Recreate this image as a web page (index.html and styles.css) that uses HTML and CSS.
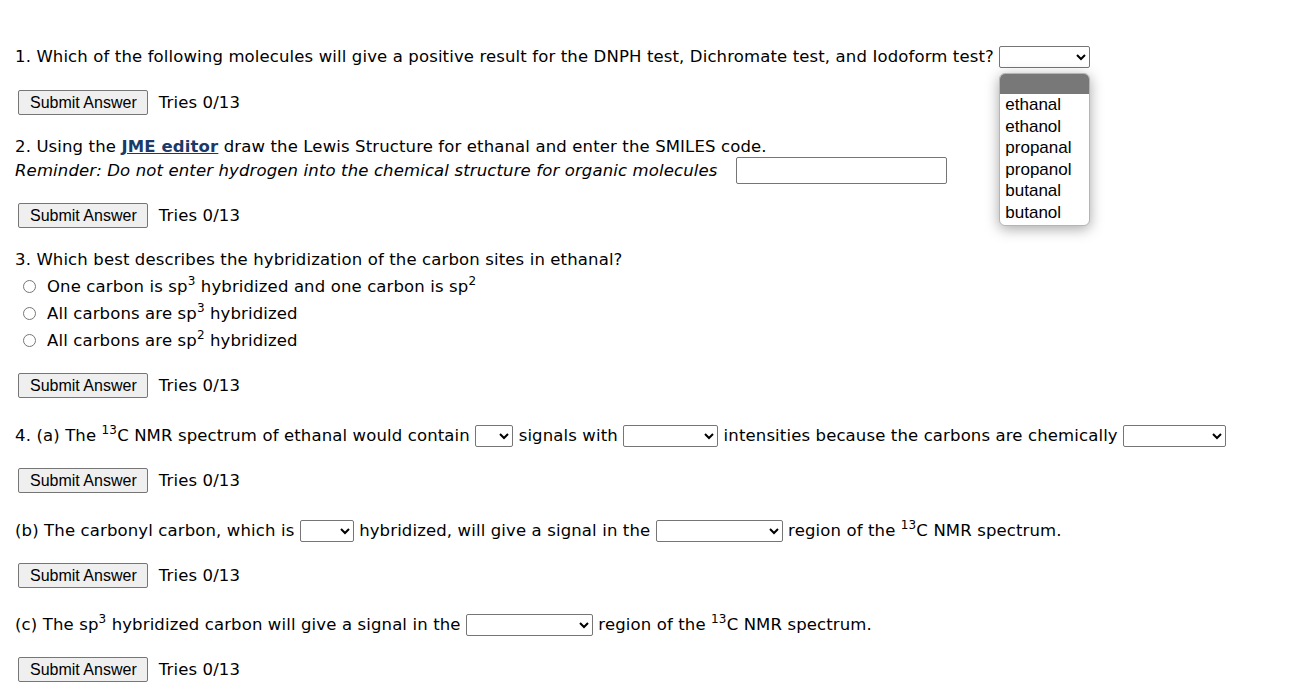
FILE: index.html
```html
<!DOCTYPE html>
<html lang="en">
<head>
    <meta charset="UTF-8">
    <meta name="viewport" content="width=device-width, initial-scale=1.0">
    <title>Ethanal - Problem Set</title>
    <link rel="stylesheet" href="styles.css">
</head>
<body>
<div class="page">

    <!-- Question 1 -->
    <div class="prompt">1. Which of the following molecules will give a positive result for the DNPH test, Dichromate test, and Iodoform test?
        <span class="pick">
            <select class="answer answer-q1"><option></option><option>ethanal</option><option>ethanol</option><option>propanal</option><option>propanol</option><option>butanal</option><option>butanol</option></select>
            <!-- opened list of the select above -->
            <ul class="dropdown">
                <li class="dropdown-blank"></li>
                <li>ethanal</li>
                <li>ethanol</li>
                <li>propanal</li>
                <li>propanol</li>
                <li>butanal</li>
                <li>butanol</li>
            </ul>
        </span>
    </div>
    <div class="submit-row gap-22">
        <button class="submit">Submit Answer</button>
        <span class="tries">Tries 0/13</span>
    </div>

    <!-- Question 2 -->
    <div class="prompt gap-21">2. Using the <a href="#" class="jme-link">JME editor</a> draw the Lewis Structure for ethanal and enter the SMILES code.</div>
    <div class="reminder-row">
        <em>Reminder: Do not enter hydrogen into the chemical structure for organic molecules</em>
        <input type="text" class="smiles-input">
    </div>
    <div class="submit-row gap-19">
        <button class="submit">Submit Answer</button>
        <span class="tries">Tries 0/13</span>
    </div>

    <!-- Question 3 -->
    <div class="prompt gap-21">3. Which best describes the hybridization of the carbon sites in ethanal?</div>
    <div class="choices">
        <label class="choice"><input type="radio" name="q3"><span>One carbon is sp<sup>3</sup> hybridized and one carbon is sp<sup>2</sup></span></label>
        <label class="choice"><input type="radio" name="q3"><span>All carbons are sp<sup>3</sup> hybridized</span></label>
        <label class="choice"><input type="radio" name="q3"><span>All carbons are sp<sup>2</sup> hybridized</span></label>
    </div>
    <div class="submit-row gap-19">
        <button class="submit">Submit Answer</button>
        <span class="tries">Tries 0/13</span>
    </div>

    <!-- Question 4 -->
    <div class="prompt gap-27">4. (a) The <sup>13</sup>C NMR spectrum of ethanal would contain <select class="answer answer-count"><option></option></select> signals with <select class="answer answer-intensity"><option></option></select> intensities because the carbons are chemically <select class="answer answer-equiv"><option></option></select></div>
    <div class="submit-row gap-21">
        <button class="submit">Submit Answer</button>
        <span class="tries">Tries 0/13</span>
    </div>

    <div class="prompt gap-27">(b) The carbonyl carbon, which is <select class="answer answer-hyb"><option></option></select> hybridized, will give a signal in the <select class="answer answer-region"><option></option></select> region of the <sup>13</sup>C NMR spectrum.</div>
    <div class="submit-row gap-21">
        <button class="submit">Submit Answer</button>
        <span class="tries">Tries 0/13</span>
    </div>

    <div class="prompt gap-26">(c) The sp<sup>3</sup> hybridized carbon will give a signal in the <select class="answer answer-region"><option></option></select> region of the <sup>13</sup>C NMR spectrum.</div>
    <div class="submit-row gap-21">
        <button class="submit">Submit Answer</button>
        <span class="tries">Tries 0/13</span>
    </div>

</div>
</body>
</html>
```

FILE: styles.css
```css
body {
    margin: 0;
    padding: 0;
    font-family: "DejaVu Sans", Verdana, sans-serif;
    font-size: 16.5px;
    letter-spacing: 0.13px;
    color: #000;
    background-color: #fff;
}

.page {
    padding: 46px 15px 0;
}

/* Question text */
.prompt {
    line-height: 22px;
    height: 22px;
    white-space: nowrap;
}

sup {
    font-size: 12px;
    line-height: 0;
    vertical-align: 7px;
}

.jme-link {
    color: #1b3a68;
    font-weight: bold;
}

/* Vertical spacing between blocks */
.gap-19 { margin-top: 19px; }
.gap-21 { margin-top: 21px; }
.gap-22 { margin-top: 22px; }
.gap-26 { margin-top: 26px; }
.gap-27 { margin-top: 27px; }

/* Select boxes */
.answer {
    height: 22px;
    margin: 0;
    padding: 0 2px;
    vertical-align: middle;
    font-family: "Liberation Sans", Arial, sans-serif;
    font-size: 13px;
    border: 1px solid #767676;
    border-radius: 2px;
    background-color: #fff;
    position: relative;
    top: -1px;
}

.answer-q1 { width: 91px; }
.answer-count { width: 38px; }
.answer-intensity { width: 95px; }
.answer-equiv { width: 103px; }
.answer-hyb { width: 54px; }
.answer-region { width: 127px; }

/* Opened list for question 1 */
.pick {
    position: relative;
    display: inline-block;
}

.dropdown {
    position: absolute;
    left: 0;
    top: 27px;
    width: 89px;
    margin: 0;
    padding: 0 0 2px;
    list-style: none;
    background-color: #fff;
    border: 1px solid #b5b5b5;
    border-radius: 6px;
    box-shadow: 0 3px 14px rgba(0, 0, 0, 0.35);
    font-family: "Liberation Sans", Arial, sans-serif;
    font-size: 17px;
    letter-spacing: 0;
    line-height: 21.5px;
    overflow: hidden;
    z-index: 5;
}

.dropdown li {
    padding-left: 5px;
    color: #000;
}

.dropdown .dropdown-blank {
    height: 20px;
    background-color: #787878;
}

/* Submit button + tries counter */
.submit-row {
    display: flex;
    align-items: center;
    height: 25px;
    padding-left: 3px;
}

.submit {
    height: 25px;
    padding: 0 10px 0 11px;
    font-family: "Liberation Sans", Arial, sans-serif;
    font-size: 16px;
    letter-spacing: 0;
    color: #000;
    background-color: #efefef;
    border: 1px solid #767676;
    border-radius: 2px;
    cursor: pointer;
}

.submit:hover {
    background-color: #e5e5e5;
}

.tries {
    margin-left: 11px;
}

/* Question 2 */
.reminder-row {
    display: flex;
    align-items: center;
    height: 27px;
    margin-top: -1px;
    white-space: nowrap;
}

.smiles-input {
    width: 211px;
    height: 27px;
    box-sizing: border-box;
    margin-left: 19px;
    border: 1px solid #767676;
    border-radius: 2px;
}

/* Question 3 */
.choices {
    margin-top: 2px;
}

.choice {
    display: flex;
    align-items: center;
    height: 27px;
}

.choice input {
    width: 13px;
    height: 13px;
    margin: 0 11px 0 8px;
}
```
